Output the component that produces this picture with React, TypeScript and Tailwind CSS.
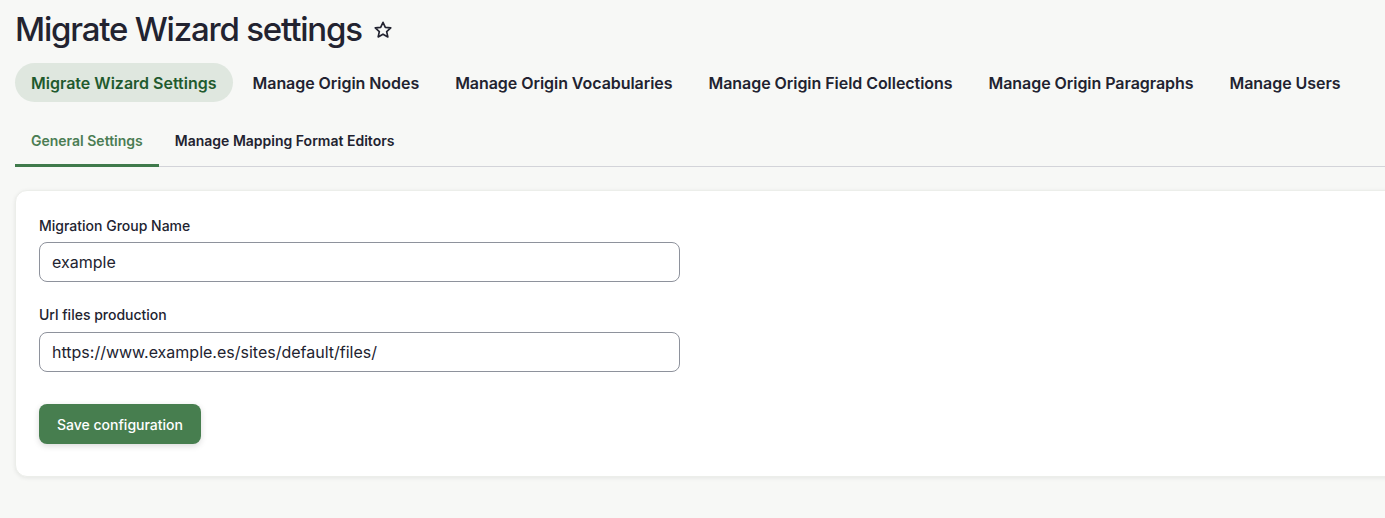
import React from "react";

const primaryTabs = [
  "Migrate Wizard Settings",
  "Manage Origin Nodes",
  "Manage Origin Vocabularies",
  "Manage Origin Field Collections",
  "Manage Origin Paragraphs",
  "Manage Users",
];

export default function App() {
  return (
    <div
      className="min-h-[518px] w-full overflow-hidden bg-[#f7f8f6] pl-[15px] text-[#222330]"
      style={{ fontFamily: "Inter, 'Noto Sans', sans-serif" }}
    >
      <div className="flex items-center pt-[9px]">
        <h1 className="text-[33px] leading-[40px] font-medium tracking-[-1.2px] text-[#222330]">
          Migrate Wizard settings
        </h1>
        <svg
          className="ml-[11px] mt-[2px]"
          width="20"
          height="20"
          viewBox="0 0 24 24"
          fill="none"
          stroke="#222330"
          strokeWidth="2"
          strokeLinejoin="round"
        >
          <path d="M12 2.8l2.8 6 6.5.7-4.9 4.4 1.4 6.4L12 17l-5.8 3.3 1.4-6.4-4.9-4.4 6.5-.7z" />
        </svg>
      </div>

      <div className="mt-[14px] flex items-center gap-1">
        {primaryTabs.map((t, i) => (
          <div
            key={t}
            className={
              i === 0
                ? "h-[39px] flex items-center rounded-full bg-[#dfe7df] px-4 text-[16px] font-semibold text-[#1f5a2e]"
                : "h-[39px] flex items-center px-4 text-[16px] tracking-[-0.05px] font-semibold text-[#222330]"
            }
          >
            {t}
          </div>
        ))}
      </div>

      <div className="mt-[19px] flex border-b border-[#d3d4d9]">
        <div className="-mb-px border-b-[3px] border-[#3f7a4b] px-4 pb-[13px] pt-[9px] text-[14px] font-semibold text-[#4b7d53]">
          General Settings
        </div>
        <div className="px-4 pb-[13px] pt-[9px] text-[14px] font-semibold text-[#222330]">
          Manage Mapping Format Editors
        </div>
      </div>

      <div className="mt-[23px] -mr-4 rounded-[12px] bg-white px-[23px] pt-[25px] pb-[32px] shadow-[0_1px_4px_rgba(0,0,0,0.08)] border border-[#eceeea]">
        <label className="block text-[14px] leading-[20px] font-medium text-[#222330]">
          Migration Group Name
        </label>
        <input
          readOnly
          value="example"
          className="mt-[6px] block h-[40px] w-[641px] rounded-[8px] border border-[#8e929c] bg-white px-3 text-[16px] text-[#222330] outline-none"
        />
        <label className="mt-[23px] block text-[14px] leading-[20px] font-medium text-[#222330]">
          Url files production
        </label>
        <input
          readOnly
          value="https://www.example.es/sites/default/files/"
          className="mt-[7px] block h-[40px] w-[641px] rounded-[8px] border border-[#8e929c] bg-white px-3 text-[16px] text-[#222330] outline-none"
        />
        <button className="mt-[32px] h-[40px] w-[162px] rounded-[8px] bg-[#477e4f] text-[14px] font-medium text-white shadow-[0_2px_6px_rgba(0,0,0,0.15)]">
          Save configuration
        </button>
      </div>
    </div>
  );
}
